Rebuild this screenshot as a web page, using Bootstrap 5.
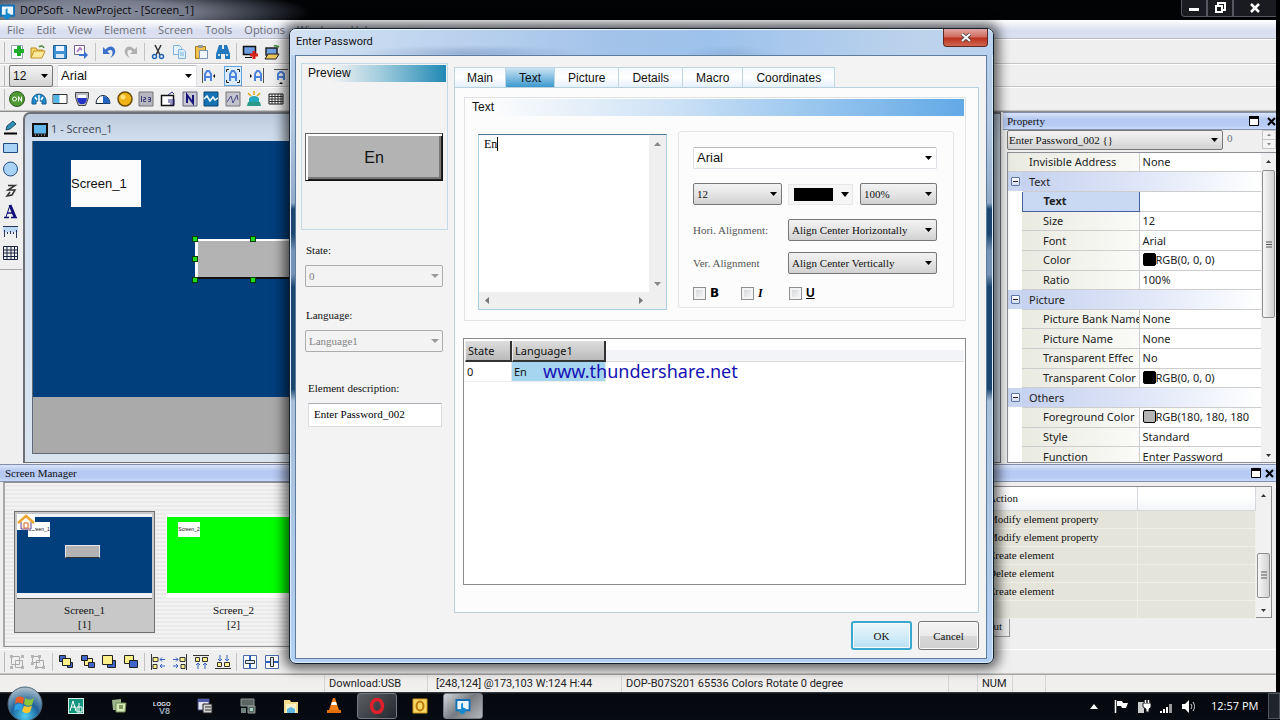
<!DOCTYPE html>
<html lang="en">
<head>
<meta charset="utf-8">
<meta name="viewport" content="width=device-width, initial-scale=1">
<title>DOPSoft - NewProject - [Screen_1]</title>
<link rel="stylesheet" href="https://cdn.jsdelivr.net/npm/bootstrap@5.3.0/dist/css/bootstrap.min.css">
<style>
:root{--sys:"Open Sans","Noto Sans",sans-serif;--ui:Roboto,"Open Sans",sans-serif;--tah:"Noto Sans","Open Sans",sans-serif;--ari:"Liberation Sans",Arial,sans-serif;--ser:"Liberation Serif","Times New Roman",serif}
body{background:#000;font:11px/16px var(--ser);color:#111;overflow-x:hidden}
button{padding:0;border:0;background:none;color:inherit;font:inherit}
svg{display:block;flex:none}
.desk{padding-right:4px;position:relative}
/* main window */
.bar-title{height:20px;background:radial-gradient(ellipse 220px 26px at 90px 12px,#8b90a0 0,#777c8c 45%,#30343e 78%,#020305 100%)}
.bar-title h1{font:11px/19px var(--sys);color:#08080c;margin:0 0 0 5px}
.cap-btn{height:17px;width:26px;background:#191b20;border:1px solid #55585f;border-top:0;display:flex;align-items:center;justify-content:center}
.cap-btn:first-child{border-radius:0 0 0 4px}.cap-btn:last-child{width:43px;border-right:0}
.bar-menu{height:19px;background:linear-gradient(#fff,#d9dff0 60%,#dbe1f1);border-bottom:1px solid #b6bac4;padding-left:7px;gap:12px;font:11px/19px var(--sys);color:#6c6f77}
.bar-tool{background:#efefef;border-bottom:1px solid #c4c4c4;border-top:1px solid #fff;padding-left:4px}
.h25{height:25px}.h23{height:23px}.h24{height:24px}
.grip{width:1px;height:20px;background:#b9b9b9;margin-right:4px}
.spread{width:271px;display:flex;justify-content:space-between;align-items:center}
.spread i{width:1px;height:18px;background:#c3c3c3}
.spread.wide{width:275px}
select,.field{appearance:none;border:1px solid #777;border-radius:2px;height:22px;padding:0 14px 0 3px;font:11px/16px var(--ser);color:#111;outline:0;
background:url("data:image/svg+xml,%3Csvg xmlns='http://www.w3.org/2000/svg' width='7' height='4'%3E%3Cpath d='M0 0h7L3.500 4z' fill='%23000'/%3E%3C/svg%3E") no-repeat right 4px center,linear-gradient(#f3f3f3,#e4e4e4 50%,#d2d2d2)}
select.flat{background-color:#fff;background-image:url("data:image/svg+xml,%3Csvg xmlns='http://www.w3.org/2000/svg' width='7' height='4'%3E%3Cpath d='M0 0h7L3.500 4z' fill='%23000'/%3E%3C/svg%3E");border-color:#dde1e6;border-top-color:#b5b9c0;font:13px/18px var(--ari)}
select:disabled{opacity:1;color:#838383;border-color:#adadad;background:url("data:image/svg+xml,%3Csvg xmlns='http://www.w3.org/2000/svg' width='8' height='4'%3E%3Cpath d='M0 0h8L4 4z' fill='%23999'/%3E%3C/svg%3E") no-repeat right 3px center,#f3f3f3}
.w-size{width:44px}.w-font{width:140px}
.w-size{font-family:var(--ari);font-size:12px}
.on{outline:1px solid #62a2de;background:#dcecfb}
/* workspace */
.work{flex:1 1 0;min-height:300px;overflow:hidden;background:#efefef;border-top:1px solid #8c8c8c}
.tools{width:22px;height:158px;padding:8px 0 8px 2px;border-bottom:1px solid #aaa;display:flex;flex-direction:column;justify-content:space-between}
.mdi{flex:1;min-width:0;border:1px solid #6d7177;border-width:2px 1px 1px 2px;border-radius:7px 0 0 0;background:linear-gradient(#bccbdd,#d2dfee 28px,#dae4f1);padding:0 8px 8px 7px;margin:0 2px 1px 1px}
.mdi h2{font:11px/20px var(--sys);color:#3c4654;margin:0;padding:5px 0 2px;height:27px;gap:3px}
.stage{flex:1;background:#aaa;border:1px solid #5f6b78;border-width:0 1px 1px;position:relative}
.screen{height:256px;background:#003e7c;position:relative}
.lbl{position:absolute;left:38px;top:19px;width:70px;height:47px;background:#fcfcfc;font:13px/47px var(--ari)}
.elem{position:absolute;left:162px;top:98px;width:117px;height:40px;background:#b3b3b3;border:2px solid #fff;border-width:2px 2px 2px 3px;border-bottom-color:#111;border-right-color:#111}
.elem b{position:absolute;width:6px;height:6px;background:#1fdc1f;border:1px solid #063c06}
.caption{height:18px;background:linear-gradient(#dbe5fb,#b4c8f2 40%,#b7cbf5 80%,#cbdafa);border:1px solid #8290ad;border-width:1px 0;line-height:16px;padding:0 2px 0 5px}
.prop{width:273px}
.prop .caption{padding:0 0 0 4px}
.prop .pick select{width:216px;height:20px;padding-left:1px}
.plist{flex:1 1 0;min-height:0;overflow:hidden;border:1px solid #8c9096;border-width:1px 0 1px 1px;background:#fff;margin:2px 0 1px 4px}
.ptab{flex:1;width:100%;min-width:0;height:314px;table-layout:fixed;border-collapse:collapse;font:11px/14px var(--tah);color:#222;white-space:nowrap}
.ptab td,.ptab th{padding:0;font-weight:400;overflow:hidden;border-bottom:1px solid #cdcdcd}
.ptab .n{background:linear-gradient(90deg,#e9eae0,#fafaf8);border-right:1px solid #cdcdcd;padding-left:21px}
.ptab .top{padding-left:21px}
.ptab .v{padding-left:3px}
.ptab .g{background:linear-gradient(90deg,#c5d1ef,#dfe6f7 50%,#fff);padding-left:7px}
.ptab .gg{background:#cbd6f1;padding-left:3px;border-bottom-color:#fff}
.ptab .gut{border:0}
.ptab .sel{background:#c9d8f3;border:1px solid #4263a0;font-weight:700}
.sw{display:inline-block;width:13px;height:13px;border:1px solid #000;border-radius:2px;vertical-align:-2px;background:#000}
.sw.grey{background:#b4b4b4}
.box{width:9px;height:9px;border:1px solid #5b75a8;border-radius:1px;background:linear-gradient(#fff,#d5ddec);position:relative;display:block}
.box::after{content:"";position:absolute;left:1px;right:1px;top:3px;height:1px;background:#223}
.vbar{width:15px;background:#f1f1f1;display:flex;flex-direction:column;align-items:center;flex:none}
.thumb{border:1px solid #8e8e8e;background:linear-gradient(90deg,#f7f7f7,#d2d2d2);border-radius:2px;display:flex;align-items:center;justify-content:center;width:13px;height:45px}
.thumb.tall{height:148px}
/* lower docks */
.docks{height:185px;background:#efefef}
.mgr{width:420px;border:1px solid #8f8f8f;border-left:2px solid #a9a9a9;margin:0 0 2px 3px;padding:28px 9px 0;gap:8px;background:repeating-linear-gradient(#f3f3f3 0 2px,#e9e9e9 2px 4px)}
.tile{width:141px;height:122px;border:1px solid transparent;text-align:center;line-height:14px;position:relative}
.tile.cur{background:#c8c8c8;border-color:#6f6f6f}
.shot{height:84px;margin:2px 2px 5px;border:solid #fdfdfd;border-width:3px 0 5px;background:#003e7c;position:relative}
.cur .shot{border-color:#eef2f6;box-shadow:0 1px #555}
.tile:not(.cur) .shot{border-width:3px 2px 5px 1px;background:#0f0}
.mini{position:absolute;left:11px;top:5px;width:22px;height:15px;background:#fff;font:5px/15px var(--ari)}
.miniel{position:absolute;left:48px;top:28px;width:35px;height:13px;background:#b3b3b3;border:1px solid #e4e8ec;border-bottom-color:#333}
.home{position:absolute;left:2px;top:2px;background:#fff}
.outp{flex:1;min-width:0;padding:4px 4px 0 0}
.otab{border:1px solid #8c8c8c;height:132px;background:#fff}
.otab table{flex:1;border-collapse:collapse;height:130px;margin:0}
.otab td,.otab th{font-weight:400;padding:0;background:#e4e4da;border-bottom:1px solid #efefe8;border-right:1px solid #f0f0ea;height:18px;line-height:14px;width:118px}
.otab th{height:23px;background:linear-gradient(#fff,#fff 45%,#f2f4f8);border-color:#d5d8de}
.otab td:first-child,.otab th:first-child{width:auto}
.otab span{display:block;width:149px;margin-left:auto}
.otabs{border:1px solid #999;border-top:0;width:calc(100% - 262px);height:19px;text-align:right;padding-right:7px}
.stat{height:18px;background:#f0efee;border-top:1px solid #a5a5a5;font:11px/17px var(--ui);color:#222}
.stat span{border-left:1px solid #d5d5d5;padding-left:4px;white-space:nowrap}
.task{height:28px;background:linear-gradient(#3c444d,#05080d 2px,#070b12);margin-right:-4px;color:#fff;font:11px/28px var(--sys);position:relative}
.task .run{width:43px;height:28px;display:flex;align-items:center;justify-content:center}
.task .act span{width:40px;height:26px;border:1px solid #777c82;border-radius:3px;background:linear-gradient(135deg,#5c6065,#24272b);display:flex;align-items:center;justify-content:center}
.task .act.hot span{background:linear-gradient(135deg,#d5d8db,#777b80 50%,#b5b8bb)}
.task .gap0{width:54px}.clock{width:57px;white-space:nowrap}
.peek{width:12px;height:26px;border:1px solid #50565d;background:#20252b}
.orb{position:absolute;left:7px;top:-6px}
/* dialog */
.dlg{position:absolute;left:289px;top:28px;width:705px;border:1px solid #14202e;border-radius:7px;box-shadow:0 0 12px 5px rgba(0,0,0,.6),inset 0 0 0 1px #dcecff;
background:linear-gradient(#b9d2ef 0,#b4c9e2 95px,#8fa9c6 174px,#1c466f 180px,#1c466f 205px,#7594b5 222px,#7594b5 245px,#1b466f 258px,#1b466f 360px,#a8bfd9 372px,#b4d0f2)}
.dlg-cap{height:26px;padding:0 5px 0 6px;background:radial-gradient(ellipse 45px 8px at 440px 24px,rgba(70,100,150,.15),transparent),radial-gradient(ellipse 110px 8px at 180px 24px,rgba(70,100,150,.3),transparent),linear-gradient(90deg,#d4e2f3,#a3c3e9 45%,#9dc2ec 60%,#bdd3ec 90%,#b9d2ef);border-radius:6px 6px 0 0;box-shadow:inset 0 1px #eef6ff}
.dlg-cap h2{font:11px/26px var(--ui);margin:0;color:#111}
.xbtn{width:45px;height:18px;border:1px solid #5d2a25;border-top:0;border-radius:0 0 4px 4px;background:linear-gradient(#e0a79f,#cf6a5d 48%,#b92f1e 52%,#d2664f);display:flex;align-items:center;justify-content:center}
.dlg-body{margin:0 6px 4px 5px;border:1px solid #5e7c9e;background:#f3f3f3;padding:7px 7px 8px 5px}
.side{width:147px;flex:none}
.pv{height:167px;border:1px solid #c3d9e4;padding:1px}
.pv h3{font:12px/17px var(--ari);height:17px;margin:0 0 51px;padding-left:5px;background:linear-gradient(90deg,#f3f3f3 20%,#9fcbdd 55%,#2189b4)}
.pvb{width:138px;height:48px;margin-left:2px;background:#b3b3b3;border:1px solid #111;border-color:#666 #111 #111 #666;box-shadow:inset 2px 2px #fff,inset -1px -1px #222,inset -3px -3px #777;font:16px/48px var(--ari);text-align:center;display:block}
.side label{display:block;margin-left:5px}
.side select{display:block;width:138px;margin-left:4px}
.mt12{margin-top:12px}.mt7{margin-top:7px}.mt20{margin-top:20px}.mt28{margin-top:28px}
.side label.dl{margin-left:7px}
.desc{height:24px;width:134px;margin-left:7px;border:1px solid #d9dde2;border-top-color:#a9adb4;background:#fff;padding:0 5px 3px}
.fill{margin-left:6px}
.tabs{margin-top:4px;height:21px;font:12px/20px var(--ari);position:relative;z-index:1}
.tabs button{height:20px;border:1px solid #c0d5e2;border-bottom:0;border-left-width:0;background:linear-gradient(#f4f9fd,#fff 50%,#e4f1fa);padding:0 13px}
.tabs button:first-child{border-left-width:1px;padding:0 12px}
.tabs .active{background:linear-gradient(#c9e2f2,#8cc3e4 45%,#3c98cd)}
.pane{border:1px solid #b9d0de;background:#fcfcfc;padding:9px 12px 27px 8px;margin-top:-1px}
.grp{border:1px solid #e0e3e6;margin-left:1px;height:224px;padding:1px}
.grp h3{font:12px/17px var(--ari);height:17px;margin:0 0 15px;padding-left:6px;background:linear-gradient(90deg,#fcfcfc 5%,#cfe3f6 40%,#62a9e6)}
.edit{width:189px;height:176px;margin:3px 11px 0 12px;border:1px solid #a9cfe2;border-top-color:#4d7590;background:#efefef;display:grid;grid-template:1fr 17px/1fr 17px;position:relative;flex:none}
.edit textarea{border:0;outline:0;resize:none;overflow:hidden;padding:1px 5px;font:12px/16px var(--ser);background:#fff;min-width:0}
.caret{position:absolute;left:18px;top:2px;width:1px;height:14px;background:#000}
.fmt{flex:1;min-width:0;height:177px;border:1px solid #e2e5e8;border-radius:3px;padding:15px 16px 0 14px;margin-right:10px;color:#555}
.line{display:flex;align-items:center;margin-bottom:14px;height:22px}
.line.tight{margin-bottom:11px}
.line>label.k{width:95px}
.line .c{flex:1;min-width:0}
.line .sz{width:89px}
.colr{width:65px;height:21px;margin:0 7px 0 6px;border:1px solid #e6e8ea;background:#f5f5f5;display:flex;align-items:center;gap:8px;padding-left:5px}
.colr span{width:39px;height:13px;background:#000}
.chk{width:48px;display:flex;align-items:center;gap:4px;color:#000;font-size:12px}
.chk .bb{font-family:"DejaVu Sans"}.chk .uu{font-family:var(--ari);text-decoration:underline}
.chk input{appearance:none;width:13px;height:13px;margin:0;border:1px solid #8e8f8f;background:linear-gradient(135deg,#cfd2d5,#fafafa);box-shadow:inset 0 0 0 2px #f4f4f4}
.lang{height:247px;border:1px solid #8b8b8b;margin-top:17px;background:#fff;padding:2px 1px;position:relative}
.lang table{font:11px/16px var(--tah);width:100%;border-collapse:separate;border-spacing:0}
.lang th{font-weight:400;height:21px;padding:0 0 0 2px;background:linear-gradient(#dedede,#b9b9b9);border-right:2px solid #333;border-bottom:2px solid #333;border-left:1px solid #eee}
.lang th.rest{background:linear-gradient(#fff 45%,#f3f4f8 45%);border:0;border-bottom:1px solid #ddd}
.lang td{height:20px;padding:0 0 0 2px;border-right:1px solid #e8e8e8;border-bottom:1px solid #eee}
.lang td.pickd{background:#a5d5ef}.lang td.rest{border:0}
.lang .c1{width:47px}.lang .c2{width:94px}
.wm{position:absolute;left:79px;top:19px;font:18px/26px var(--tah);color:#1512b4}
.acts{gap:6px;margin-top:8px}
.push{width:61px;height:29px;border:1px solid #757575;border-radius:3px;background:linear-gradient(#f4f4f4,#ebebeb 50%,#d8d8d8 50%,#d0d0d0);box-shadow:inset 0 0 0 1px #fafafa}
.push.def{border:2px solid #3aa7cf;background:linear-gradient(#eaf6fb,#d3edf9 50%,#b9e0f2)}
</style>
</head>
<body>
<svg width="0" height="0" class="position-absolute" aria-hidden="true"><defs>
<symbol id="app" viewBox="0 0 16 16"><path d="M1 1h14v11H1z" fill="#eaf6ff" stroke="#1470b5" stroke-width="2"/><path d="M6 5l2-1v5l3 1v3l-2 3H6l-3-4 1-1 2 1z" fill="#1489cf"/></symbol>
<symbol id="dn" viewBox="0 0 8 5"><path d="M0 0h8L4 5z"/></symbol>
<symbol id="sq" viewBox="0 0 10 10"><path d="M.5.5h9v9h-9z" fill="#fff" stroke="#000"/><path d="M0 0h10v3H0z"/></symbol>
<symbol id="xx" viewBox="0 0 9 9"><path d="M1 1l7 7M8 1L1 8" stroke="#000" stroke-width="2"/></symbol>
</defs></svg>
<div class="desk d-flex flex-column min-vh-100">
 <header class="bar-title d-flex align-items-start">
  <svg width="15" height="16" class="mt-1"><use href="#app"/></svg>
  <h1>DOPSoft - NewProject - [Screen_1]</h1>
  <div class="d-flex ms-auto">
   <button class="cap-btn" aria-label="Minimize"><svg width="12" height="10"><path d="M1 5h10v3H1z" fill="#fff"/></svg></button>
   <button class="cap-btn" aria-label="Restore"><svg width="12" height="12"><path d="M4 3V1h7v7H9" fill="none" stroke="#fff" stroke-width="2"/><path d="M2 4h6v6H2z" fill="none" stroke="#fff" stroke-width="2"/></svg></button>
   <button class="cap-btn" aria-label="Close"><svg width="10" height="10"><path d="M1 1l8 8M9 1L1 9" stroke="#fff" stroke-width="2.500"/></svg></button>
  </div>
 </header>
 <nav class="bar-menu d-flex"><button>File</button><button>Edit</button><button>View</button><button>Element</button><button>Screen</button><button>Tools</button><button>Options</button><button>Window</button><button>Help</button></nav>

 <div class="bar-tool h25 d-flex align-items-center"><span class="grip"></span><div class="spread">
  <button aria-label="New"><svg width="16" height="16"><path d="M2.500 1.500h11v13h-11z" fill="#fff" stroke="#9aa3b3"/><path d="M8 2h4v3h3v4h-3v3H8V9H5V5h3z" fill="#1fae2c"/></svg></button>
  <button aria-label="Open"><svg width="16" height="16"><path d="M1 14V4h5l1 2h6v2" fill="#f7d66a" stroke="#b98a1c"/><path d="M1 14l3-7h11l-3 7z" fill="#ffe99a" stroke="#c2942a"/><path d="M9 3c2-2 4-1 5 1" fill="none" stroke="#4a8a35" stroke-width="1.500"/></svg></button>
  <button aria-label="Save"><svg width="16" height="16"><path d="M1.500 1.500h13v13h-13z" fill="#3f92d2" stroke="#1d5f9d"/><path d="M4 2h8v5H4z" fill="#eaf4ff"/><path d="M4 10h8v4H4z" fill="#d8e8f4"/></svg></button>
  <button aria-label="Export"><svg width="16" height="16"><path d="M1.500 1.500h10v9h-10z" fill="#fff" stroke="#6f6390"/><path d="M4 8l3-4 2 2" fill="none" stroke="#b07ec0" stroke-width="2"/><path d="M6 10h5V7l4 4-4 4v-3H6z" fill="#3b6fd0"/></svg></button><i></i>
  <button aria-label="Undo"><svg width="16" height="16"><path d="M2 3v7h7L6.500 7.500C9 5 12 6 11.500 9c0 2-1.500 4-2.500 5 4-2 6-5 5-8-1-4-6-5-9.500-.5z" fill="#3d70c8"/></svg></button>
  <button aria-label="Redo"><svg width="16" height="16"><path d="M14 3v7H7l2.500-2.500C7 5 4 6 4.500 9c0 2 1.500 4 2.500 5C3 12 1 9 2 6c1-4 6-5 9.500-.5z" fill="#b0b0b0"/></svg></button><i></i>
  <button aria-label="Cut"><svg width="16" height="16"><path d="M5 1l5 10M11 1L6 11" stroke="#333" stroke-width="1.500"/><circle cx="4.500" cy="12.500" r="2" fill="none" stroke="#2467b5" stroke-width="1.500"/><circle cx="11.500" cy="12.500" r="2" fill="none" stroke="#2467b5" stroke-width="1.500"/></svg></button>
  <button aria-label="Copy"><svg width="16" height="16"><path d="M1.500 1.500h6l2 2v7h-8z" fill="#e8f4ff" stroke="#7fb2de"/><path d="M6.500 5.500h5l2 2v7h-7z" fill="#dceeff" stroke="#7fb2de"/><path d="M8 9h4M8 11h4" stroke="#7fb2de"/></svg></button>
  <button aria-label="Paste"><svg width="16" height="16"><path d="M2.500 2.500h10v12h-10z" fill="#f1c24e" stroke="#a37a1e"/><path d="M5 1h5v3H5z" fill="#999"/><path d="M6.500 6.500h8v8h-8z" fill="#f2f7ff" stroke="#7b90b5"/></svg></button>
  <button aria-label="Find"><svg width="16" height="16"><path d="M4 1h3v4h2V1h3l3 9v5h-5v-5H6v5H1v-5z" fill="#2378c0"/><path d="M3 11h2M11 11h2" stroke="#bfe0f8" stroke-width="2"/></svg></button><i></i>
  <button aria-label="New screen"><svg width="16" height="16"><path d="M1.500 2.500h12v8h-12z" fill="#6d9de0" stroke="#111" stroke-width="1.500"/><path d="M3 13.500h7" stroke="#111"/><path d="M12 7v8M8 11h8" stroke="#d8231a" stroke-width="3"/></svg></button>
  <button aria-label="Open screen"><svg width="16" height="16"><path d="M2 4h11v7H2z" fill="#6ea2e5" stroke="#222" stroke-width="1.500"/><path d="M1 15l3-5h11l-3 5z" fill="#efc85a" stroke="#222"/><path d="M10 2c2-1 3 0 5 1" fill="none" stroke="#338a35" stroke-width="1.500"/></svg></button>
 </div></div>
 <div class="bar-tool h23 d-flex align-items-center"><span class="grip"></span>
  <select class="w-size me-1" aria-label="Font size"><option>12</option></select>
  <select class="flat w-font me-1" aria-label="Font"><option>Arial</option></select>
  <div class="d-flex gap-2 align-items-center">
  <button aria-label="Align left"><svg width="16" height="18"><path d="M1.500 1v15" stroke="#555"/><path d="M4 14V7l2-3h2l2 3v7M4 10h6" fill="none" stroke="#4c83dc" stroke-width="2"/><path d="M14 7v4l-2-2z"/></svg></button>
  <button class="on" aria-label="Align center"><svg width="16" height="18"><path d="M1.500 5V2.500H4M12 2.500h2.500V5M1.500 13v2.500H4M12 15.500h2.500V13" fill="none" stroke="#222"/><path d="M5 14V7l2-3h2l2 3v7M5 10h6" fill="none" stroke="#4c83dc" stroke-width="2"/></svg></button>
  <button aria-label="Align right"><svg width="16" height="18"><path d="M14.500 1v15" stroke="#555"/><path d="M6 14V7l2-3h2l2 3v7M6 10h6" fill="none" stroke="#4c83dc" stroke-width="2"/><path d="M1 7v4l2-2z"/></svg></button>
  <button aria-label="Align top"><svg width="16" height="18"><path d="M1 2.500h14" stroke="#555"/><path d="M5 13V7l2-2h2l2 2v6M5 10h6" fill="none" stroke="#4c83dc" stroke-width="2"/><path d="M6 17h4l-2-2z"/></svg></button></div>
 </div>
 <div class="bar-tool h24 d-flex align-items-center"><span class="grip"></span><div class="spread wide">
  <button aria-label="Button"><svg width="16" height="16"><circle cx="8" cy="8" r="7.500" fill="#4f9a35" stroke="#2c5a22"/><circle cx="5.500" cy="8" r="2" fill="none" stroke="#fff"/><path d="M9.500 10.500v-5l3 5v-5" fill="none" stroke="#fff"/></svg></button>
  <button aria-label="Meter"><svg width="16" height="16"><path d="M1 13v-3a7 7 0 0 1 14 0v3h-4v-3H5v3z" fill="#2089cb" stroke="#135b8d"/><path d="M8 4v8M4 6l2 3M12 6l-2 3" stroke="#fff" stroke-width="1.500"/></svg></button>
  <button aria-label="Bar"><svg width="16" height="16"><path d="M1 3.500h14v9H1z" fill="#fff" stroke="#333"/><path d="M1.500 4h6v8h-6z" fill="#54b3e6"/></svg></button>
  <button aria-label="Pipe"><svg width="16" height="16"><path d="M1.500 1.500h13v5l-3 8h-7l-3-8z" fill="#b9bcc2" stroke="#444"/><path d="M3 7h10l-1 4-2 2H6l-2-2z" fill="#2432c8"/><path d="M4 4h8v3H4z" fill="#fff"/></svg></button>
  <button aria-label="Pie"><svg width="16" height="16"><path d="M1 12.500a7 8 0 0 1 14 0z" fill="#fff" stroke="#123"/><path d="M8 5a7 8 0 0 1 7 7.500H8z" fill="#1e62c2"/></svg></button>
  <button aria-label="Indicator"><svg width="16" height="16"><circle cx="8" cy="8" r="7" fill="#f0b31a" stroke="#6b4a06" stroke-width="1.500"/><circle cx="6" cy="6" r="2.500" fill="#ffe27a"/></svg></button>
  <button aria-label="Data display"><svg width="16" height="16"><path d="M1 1h14v14H1z" fill="#b7b7c2" stroke="#777"/><path d="M3.500 5v6M5.500 6.500h2v2h-2v2h2.500M10 6.500h2.500v4H10M10 8.500h2" fill="none" stroke="#3d3d7a"/></svg></button>
  <button aria-label="Graph display"><svg width="16" height="16"><path d="M1.500 4.500h12v10h-12z" fill="#fff" stroke="#111" stroke-width="1.500"/><path d="M8 4l4-3 2 2M8 9h7M8 11h7M10 13h5" fill="none" stroke="#2a2a88"/></svg></button>
  <button aria-label="Input"><svg width="16" height="16"><path d="M1 1h14v14H1z" fill="#c9c9d6" stroke="#667"/><path d="M5 12V4l6 8V4" fill="none" stroke="#15157a" stroke-width="2"/></svg></button>
  <button aria-label="Curve"><svg width="16" height="16"><path d="M1 1h14v14H1z" fill="#1673b3" stroke="#0b4470"/><path d="M1 8l3-3 3 5 3-4 2 3 3-2" fill="none" stroke="#fff" stroke-width="1.500"/></svg></button>
  <button aria-label="Sampling"><svg width="16" height="16"><path d="M1 1h14v14H1z" fill="#c4c4cc" stroke="#777"/><path d="M2 11l4-6 2 7 4-8 1 5" fill="none" stroke="#4b4b8a"/></svg></button>
  <button aria-label="Alarm"><svg width="16" height="16"><path d="M3 11V8a5 3 0 0 1 10 0v3z" fill="#23a9bd"/><path d="M2 11h12l1 4H1z" fill="#2c9a86"/><path d="M8 0v4M2 2l3 3M14 2l-3 3" stroke="#e0a61c" stroke-width="1.500"/></svg></button>
  <button aria-label="Keypad"><svg width="16" height="16"><path d="M1 3h14v10H1z" fill="#fff" stroke="#111"/><path d="M1 5.500h14M1 8h14M1 10.500h14M4 3v10M7 3v10M10 3v10M13 3v10" stroke="#333"/></svg></button>
 </div></div>

 <main class="work d-flex">
  <div class="tools">
   <button aria-label="Line"><svg width="17" height="15"><path d="M2 13.500h13" stroke="#000" stroke-width="2"/><path d="M4 10l1-4 6-5 3 3-6 5z" fill="#3390b5" stroke="#1d4b62"/></svg></button>
   <button aria-label="Rectangle"><svg width="17" height="14"><path d="M1.500 2.500h14v9h-14z" fill="#a9d2f7" stroke="#234a80"/></svg></button>
   <button aria-label="Circle"><svg width="17" height="16"><circle cx="8.500" cy="8" r="7" fill="#a9d2f7" stroke="#234a80"/></svg></button>
   <button aria-label="Polyline"><svg width="17" height="14"><path d="M6 2.500h7L6 7h7l-3 5-5 1 3-4" fill="none" stroke="#333" stroke-width="1.500"/></svg></button>
   <button aria-label="Text"><svg width="17" height="16"><path d="M4 14L8 2l5 12" fill="none" stroke="#101078"/><path d="M8 2l5 12" stroke="#101078" stroke-width="3"/><path d="M5 10h6M2 14.500h5M9 14.500h6" stroke="#101078" stroke-width="1.500"/></svg></button>
   <button aria-label="Scale"><svg width="17" height="14"><path d="M1 1h15v6H1z" fill="#bcd6f5"/><path d="M1 1.500h15M2.500 5v7M5.500 7v2M8.500 6v3M11.500 7v2M14.500 5v8" stroke="#26365c"/></svg></button>
   <button aria-label="Table"><svg width="17" height="16"><path d="M1.500 1.500h14v13h-14zM1 5h15M1 8h15M1 11.500h15M5 1v14M9 1v14M12.500 1v14" fill="none" stroke="#1b2440"/></svg></button>
  </div>
  <section class="mdi d-flex flex-column">
   <h2 class="d-flex"><svg width="16" height="14" class="mt-1"><path d="M1 1h14v12H1z" fill="#63b6ec" stroke="#111" stroke-width="2"/><path d="M1 12h14" stroke="#111" stroke-width="3"/><path d="M3 12h10" stroke="#eee" stroke-dasharray="1 2"/></svg>1 - Screen_1</h2>
   <div class="stage"><div class="screen"><div class="lbl">Screen_1</div>
    <div class="elem"><b style="left:-6px;top:-5px"></b><b style="left:52px;top:-5px"></b><b style="left:-6px;top:15px"></b><b style="left:-6px;top:36px"></b><b style="left:52px;top:36px"></b></div></div></div>
  </section>
  <aside class="prop d-flex flex-column">
   <div class="caption d-flex align-items-center gap-1"><span class="me-auto">Property</span><svg width="10" height="10" class="me-1"><use href="#sq"/></svg><svg width="9" height="9"><use href="#xx"/></svg></div>
   <div class="pick d-flex ps-1"><select aria-label="Element"><option>Enter Password_002 {}</option></select><span class="ms-1 text-secondary flex-fill">0</span><svg width="14" height="19"><path d="M.5.500h13v18H.5zM0 9.500h14" fill="#f3f3f3" stroke="#c5c5c5"/><path d="M5 6h4L7 3.500zM5 13h4l-2 2.500z" fill="#888"/></svg></div>
   <div class="plist d-flex"><table class="ptab"><colgroup><col style="width:14px"><col style="width:117px"><col></colgroup>
    <tr><th colspan="2" class="n top">Invisible Address</th><td class="v">None</td></tr>
    <tr><td class="gg"><span class="box"></span></td><th colspan="2" class="g">Text</th></tr>
    <tr><td class="gut"></td><th class="n sel">Text</th><td></td></tr>
    <tr><td class="gut"></td><th class="n">Size</th><td class="v">12</td></tr>
    <tr><td class="gut"></td><th class="n">Font</th><td class="v">Arial</td></tr>
    <tr><td class="gut"></td><th class="n">Color</th><td class="v"><span class="sw"></span>RGB(0, 0, 0)</td></tr>
    <tr><td class="gut"></td><th class="n">Ratio</th><td class="v">100%</td></tr>
    <tr><td class="gg"><span class="box"></span></td><th colspan="2" class="g">Picture</th></tr>
    <tr><td class="gut"></td><th class="n">Picture Bank Name</th><td class="v">None</td></tr>
    <tr><td class="gut"></td><th class="n">Picture Name</th><td class="v">None</td></tr>
    <tr><td class="gut"></td><th class="n">Transparent Effec</th><td class="v">No</td></tr>
    <tr><td class="gut"></td><th class="n">Transparent Color</th><td class="v"><span class="sw"></span>RGB(0, 0, 0)</td></tr>
    <tr><td class="gg"><span class="box"></span></td><th colspan="2" class="g">Others</th></tr>
    <tr><td class="gut"></td><th class="n">Foreground Color</th><td class="v"><span class="sw grey"></span>RGB(180, 180, 180</td></tr>
    <tr><td class="gut"></td><th class="n">Style</th><td class="v">Standard</td></tr>
    <tr><td class="gut"></td><th class="n">Function</th><td class="v">Enter Password</td></tr>
   </table>
   <div class="vbar"><svg width="7" height="17" viewBox="0 0 7 17"><path d="M1 10h5L3.500 7z" fill="#333"/></svg><div class="thumb tall"><svg width="6" height="7"><path d="M0 1h6M0 3.500h6M0 6h6" stroke="#555"/></svg></div><svg width="7" height="14" class="mt-auto"><path d="M1 6h5L3.500 9z" fill="#333"/></svg></div></div>
  </aside>
 </main>

 <section class="docks d-flex flex-column">
  <div class="caption d-flex align-items-center gap-1"><span class="me-auto">Screen Manager</span><svg width="10" height="10"><use href="#sq"/></svg><svg width="9" height="9"><use href="#xx"/></svg></div>
  <div class="d-flex flex-fill">
   <div class="mgr d-flex">
    <div class="tile cur"><div class="shot"><span class="mini">Screen_1</span><span class="miniel"></span></div><svg class="home" width="18" height="16"><path d="M4 8v7h10V8" fill="#fff3d6" stroke="#6a3fa0"/><path d="M1 9l8-7 8 7" fill="none" stroke="#eda431" stroke-width="2.500"/><path d="M7 9h4v5H7z" fill="#fff" stroke="#d5662c"/></svg>Screen_1<br>[1]</div>
    <div class="tile"><div class="shot"><span class="mini">Screen_2</span></div>Screen_2<br>[2]</div>
   </div>
   <div class="outp"><div class="otab d-flex"><table><tr><th><span>Action</span></th><th></th></tr>
    <tr><td><span>Modify element property</span></td><td></td></tr><tr><td><span>Modify element property</span></td><td></td></tr><tr><td><span>Create element</span></td><td></td></tr><tr><td><span>Delete element</span></td><td></td></tr><tr><td><span>Create element</span></td><td></td></tr><tr><td></td><td></td></tr></table>
    <div class="vbar"><svg width="7" height="66"><path d="M1 10h5L3.500 7z" fill="#333"/></svg><div class="thumb"><svg width="6" height="9"><path d="M0 1h6M0 4h6M0 7h6" stroke="#555"/></svg></div><svg width="7" height="14" class="mt-auto"><path d="M1 6h5L3.500 9z" fill="#333"/></svg></div></div>
    <div class="otabs">Output</div></div>
  </div>
 </section>

 <div class="bar-tool h25 d-flex align-items-center"><span class="grip"></span><div class="spread">
  <button aria-label="Group"><svg width="16" height="16"><path d="M2.500 2.500h8v8h-8zM6.500 6.500h7v7h-7z" fill="none" stroke="#aaa"/><path d="M1 1h3v3H1zM12 1h3v3h-3zM1 12h3v3H1zM12 12h3v3h-3z" fill="#b5b5b5"/></svg></button>
  <button aria-label="Ungroup"><svg width="16" height="16"><path d="M2.500 2.500h7v6h-7zM6.500 6.500h7v7h-7z" fill="none" stroke="#aaa"/><path d="M1 1h3v3H1zM8 1h3v3H8zM1 8h3v3H1zM12 12h3v3h-3zM5 12h3v3H5z" fill="#b5b5b5"/></svg></button><i></i>
  <button aria-label="Bring front"><svg width="16" height="16" stroke="#222"><path d="M1.500 1.500h6v6h-6zM9.500 8.500h5v5h-5z" fill="#3f66c8"/><path d="M4.500 4.500h8v7h-8z" fill="#fbf08a"/></svg></button>
  <button aria-label="Bring back"><svg width="16" height="16" stroke="#222"><path d="M4.500 4.500h8v7h-8z" fill="#fbf08a"/><path d="M1.500 1.500h6v5h-6zM8.500 8.500h6v5h-6z" fill="#3f66c8"/></svg></button>
  <button aria-label="Forward"><svg width="16" height="16" stroke="#222"><path d="M6.500 6.500h8v7h-8z" fill="#3f66c8"/><path d="M1.500 1.500h10v9h-10z" fill="#fbf08a"/></svg></button>
  <button aria-label="Backward"><svg width="16" height="16" stroke="#222"><path d="M1.500 1.500h9v8h-9z" fill="#fbf08a"/><path d="M6.500 6.500h8v7h-8z" fill="#3f66c8"/></svg></button><i></i>
  <button aria-label="Left edges"><svg width="16" height="16"><path d="M1.500 0v16M3 3.500h5v4H3zM3 10.500h4v4H3z" fill="#fbf08a" stroke="#333"/><path d="M15 5.500h-5m2-2l-2 2 2 2M15 12h-5m2-2l-2 2 2 2" fill="none" stroke="#3460c0"/></svg></button>
  <button aria-label="Right edges"><svg width="16" height="16"><path d="M14.500 0v16M8 3.500h5v4H8zM9 10.500h4v4H9z" fill="#fbf08a" stroke="#333"/><path d="M1 5.500h5m-2-2l2 2-2 2M1 12h5m-2-2l2 2-2 2" fill="none" stroke="#3460c0"/></svg></button>
  <button aria-label="Top edges"><svg width="16" height="16"><path d="M0 1.500h16M2.500 3.500h4v4h-4zM9.500 3.500h5v4h-5z" fill="#fbf08a" stroke="#333"/><path d="M5 15V9m-2 2l2-2 2 2M12 15V9m-2 2l2-2 2 2" fill="none" stroke="#3460c0"/></svg></button>
  <button aria-label="Bottom edges"><svg width="16" height="16"><path d="M0 14.500h16M2.500 8.500h4v4h-4zM9.500 8.500h5v4h-5z" fill="#fbf08a" stroke="#333"/><path d="M5 1v6m-2-2l2 2 2-2M12 1v6m-2-2l2 2 2-2" fill="none" stroke="#3460c0"/></svg></button><i></i>
  <button aria-label="Center vertically"><svg width="16" height="16"><path d="M1.500 1.500h13v13h-13z" fill="#fff" stroke="#4a6aa8"/><path d="M3.500 6.500h9v3h-9z" fill="#dce8fb" stroke="#333"/><path d="M8 2v4M8 14v-4" stroke="#2c5fc5" stroke-width="2"/></svg></button>
  <button aria-label="Center horizontally"><svg width="16" height="16"><path d="M1.500 1.500h13v13h-13z" fill="#fff" stroke="#4a6aa8"/><path d="M6.500 3.500h3v9h-3z" fill="#dce8fb" stroke="#333"/><path d="M2 8h4M14 8h-4" stroke="#2c5fc5" stroke-width="2"/></svg></button>
 </div></div>
 <footer class="stat d-flex"><span class="border-0" style="flex:0 1 324px"></span><span style="flex:0 1 103px">Download:USB</span><span style="flex:0 1 194px;padding-left:8px">[248,124] @173,103 W:124 H:44</span><span style="flex:0 1 327px">DOP-B07S201 65536 Colors Rotate 0 degree</span><span style="width:29px"></span><span style="width:35px">NUM</span><span style="width:33px"></span><span></span></footer>
 <div class="task d-flex align-items-center">
  <button class="orb" aria-label="Start"><svg width="36" height="36"><defs><radialGradient id="og" cx=".5" cy=".85" r=".8"><stop offset="0" stop-color="#4fd0f5"/><stop offset=".5" stop-color="#1d639a"/><stop offset="1" stop-color="#a7bac8"/></radialGradient></defs><circle cx="18" cy="18" r="17" fill="url(#og)" stroke="#4b6577"/><path d="M9 12c3-2 5-2 8 0l-1 6c-3-2-6-2-8 0z" fill="#ee5a24"/><path d="M18 12c3 2 6 2 9 0l-2 7c-3 1-5 1-8-1z" fill="#8cc63e"/><path d="M8 19c3-2 5-2 8 0l-2 6c-2-2-5-2-7 0z" fill="#2f9fe8"/><path d="M17 20c3 1 5 1 8 0l-2 6c-3 2-6 1-8-1z" fill="#fbc72c"/></svg></button>
  <div class="gap0"></div>
  <button class="run" aria-label="Simulator"><svg width="16" height="16"><path d="M0 0h16v16H0z" fill="#d8efe8"/><path d="M1 1h14v14H1z" fill="#12957e"/><path d="M2 13L5 3l3 10M3 9h5M9 9h5v5H9zM11 5v9" fill="none" stroke="#fff"/></svg></button>
  <button class="run" aria-label="Blocks"><svg width="16" height="16"><path d="M1 2l9-1v11H2z" fill="#9db58c"/><path d="M5 5h10l-1 9H5z" fill="#d6e8b8" stroke="#6d8a50"/><path d="M8 7h4v4H8z" fill="#7e9a5c"/></svg></button>
  <button class="run" aria-label="LOGO V8"><svg width="18" height="18" font-family="Liberation Sans" font-weight="700" fill="#e6eef5"><text x="0" y="9" font-size="6">LOGO</text><text x="6" y="17" font-size="9" fill="#98a8b5">V8</text></svg></button>
  <button class="run" aria-label="Editor"><svg width="16" height="16"><path d="M1 1h11v11H1z" fill="#e5e5f2" stroke="#444a80"/><path d="M1 1h11v3H1z" fill="#5058a8"/><path d="M6 6h9v9H6z" fill="#d2d2d2" stroke="#222"/><path d="M8 9h6M8 12h6" stroke="#333"/></svg></button>
  <button class="run" aria-label="Network"><svg width="16" height="16"><path d="M1 1h13v7H1zM8 8h7v7H8z" fill="#5c6562" stroke="#8d9994"/><path d="M1 10h5v5H1z" fill="#70807a"/><path d="M10 10h3v3h-3z" fill="#9fd6c4"/></svg></button>
  <button class="run" aria-label="Explorer"><svg width="16" height="16"><path d="M1 2h6l1 2h7v11H1z" fill="#f3dc8e"/><path d="M3 6h10v9H3z" fill="#fbf2c8"/><path d="M4 15v-4l4-2 4 2v4" fill="#61b8e4"/></svg></button>
  <button class="run" aria-label="Media player"><svg width="16" height="16"><path d="M7 0h2l4 12H3z" fill="#ef7e16"/><path d="M6 4h4l1 3H5z" fill="#fff"/><path d="M1 12h14v3H1z" fill="#e26d0c"/></svg></button>
  <button class="run act" aria-label="Browser"><span><svg width="16" height="16"><ellipse cx="8" cy="8" rx="5.500" ry="6.500" fill="none" stroke="#e0202a" stroke-width="3.500"/></svg></span></button>
  <button class="run" aria-label="Mail"><svg width="16" height="16"><path d="M1 1h14v14H1z" fill="#f8d767" stroke="#d19a1c"/><ellipse cx="8" cy="8" rx="3.500" ry="4.500" fill="none" stroke="#b9780a" stroke-width="2"/></svg></button>
  <button class="run act hot" aria-label="DOPSoft"><span><svg width="16" height="15"><use href="#app"/></svg></span></button>
  <div class="d-flex align-items-center ms-auto">
   <svg width="8" height="5" class="me-3"><path d="M0 5h8L4 0z" fill="#fff"/></svg>
   <svg width="15" height="15" class="me-2"><path d="M1.500 1v13" stroke="#fff" stroke-width="1.500"/><path d="M3 2h5l1 2h5l-2 5H8L7 7H3z" fill="#fff"/></svg>
   <svg width="14" height="15" class="me-2"><path d="M1 3h6v11H1z" fill="#ccc"/><path d="M6 4h8v4l-2 2v3H9v-3L6 8z" fill="#fff" stroke="#222"/><path d="M8.500 1v3M11.500 1v3" stroke="#fff" stroke-width="1.500"/></svg>
   <svg width="14" height="15" class="me-2"><path d="M1 14v-2h2v2M4 14v-4h2v4M7 14V8h2v6" fill="#fff"/><path d="M10 14V5h3v9" fill="#999"/></svg>
   <svg width="14" height="15" class="me-3"><path d="M1 5h3l4-4v13l-4-4H1z" fill="#fff"/><path d="M10 5c1 2 1 3 0 5M12 3c2 3 2 6 0 9" fill="none" stroke="#ddd"/></svg>
   <span class="clock">12:57 PM</span><button class="peek" aria-label="Show desktop"></button>
  </div>
 </div>

 <section class="dlg" role="dialog" aria-label="Enter Password">
  <div class="dlg-cap d-flex justify-content-between align-items-start"><h2>Enter Password</h2><button class="xbtn" aria-label="Close dialog"><svg width="10" height="9"><path d="M1 1l8 7M9 1L1 8" stroke="#444" stroke-width="3.500"/><path d="M1 1l8 7M9 1L1 8" stroke="#fff" stroke-width="2"/></svg></button></div>
  <div class="dlg-body">
   <div class="d-flex">
    <div class="side">
     <div class="pv"><h3>Preview</h3><div class="pvb">En</div></div>
     <label class="mt12" for="st">State:</label><select class="mt7" id="st" disabled><option>0</option></select>
     <label class="mt20" for="la">Language:</label><select class="mt7" id="la" disabled><option>Language1</option></select>
     <label class="mt28 dl" for="de">Element description:</label><input id="de" class="desc mt7" value="Enter Password_002">
    </div>
    <div class="flex-fill fill">
     <div class="tabs d-flex"><button>Main</button><button class="active">Text</button><button>Picture</button><button>Details</button><button>Macro</button><button>Coordinates</button></div>
     <div class="pane">
      <div class="grp"><h3>Text</h3>
       <div class="d-flex">
        <div class="edit"><textarea aria-label="Text">En</textarea><svg width="17" height="157"><path d="M5 11h7L8.500 7zM5 147h7l-3.500 4z" fill="#888"/></svg><svg width="170" height="17"><path d="M10 5v7L6 8.500zM160 5v7l4-3.500z" fill="#777"/></svg><span class="caret"></span></div>
        <div class="fmt">
         <div class="line"><select class="flat w-100" aria-label="Font name"><option>Arial</option></select></div>
         <div class="line"><select class="sz" aria-label="Size"><option>12</option></select><button class="colr" aria-label="Text color"><span></span><svg width="8" height="5"><use href="#dn"/></svg></button><select class="c" aria-label="Ratio"><option>100%</option></select></div>
         <div class="line tight"><label class="k" for="ha">Hori. Alignment:</label><select id="ha" class="c"><option>Align Center Horizontally</option></select></div>
         <div class="line tight"><label class="k" for="va">Ver. Alignment</label><select id="va" class="c"><option>Align Center Vertically</option></select></div>
         <div class="d-flex"><label class="chk"><input type="checkbox"><b class="bb">B</b></label><label class="chk"><input type="checkbox"><b><i>I</i></b></label><label class="chk"><input type="checkbox"><b class="uu">U</b></label></div>
        </div>
       </div>
      </div>
      <div class="lang"><table><colgroup><col class="c1"><col class="c2"><col></colgroup><tr><th>State</th><th>Language1</th><th class="rest"></th></tr><tr><td>0</td><td class="pickd">En</td><td class="rest"></td></tr></table><span class="wm">www.thundershare.net</span></div>
     </div>
    </div>
   </div>
   <div class="d-flex justify-content-end acts"><button class="push def">OK</button><button class="push">Cancel</button></div>
  </div>
 </section>
</div>
<script src="https://cdn.jsdelivr.net/npm/bootstrap@5.3.0/dist/js/bootstrap.bundle.min.js"></script>
</body>
</html>
